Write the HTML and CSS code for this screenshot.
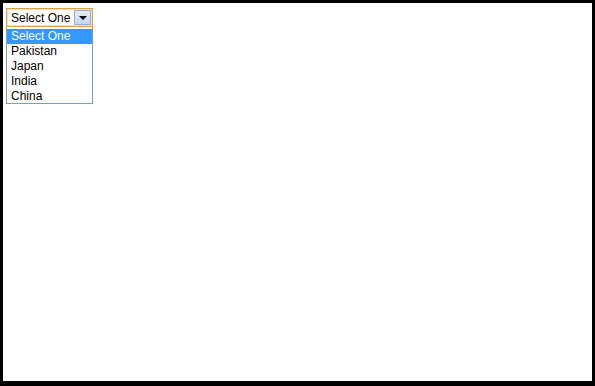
FILE: index.html
```html
<!DOCTYPE html>
<html>
<head>
<meta charset="utf-8">
<link rel="stylesheet" href="styles.css">
</head>
<body>
<div class="frame">
  <div class="combo">
    <div class="field">
      <span class="value">Select One</span>
      <span class="btn"><span class="tri"></span></span>
    </div>
    <ul class="list">
      <li class="item selected">Select One</li>
      <li class="item">Pakistan</li>
      <li class="item">Japan</li>
      <li class="item">India</li>
      <li class="item">China</li>
    </ul>
  </div>
</div>
</body>
</html>
```

FILE: styles.css
```css
html, body {
  margin: 0;
  padding: 0;
  background: #000;
}
.frame {
  box-sizing: border-box;
  width: 595px;
  height: 386px;
  border-style: solid;
  border-color: #000;
  border-width: 3px 3px 5px 3px;
  background: #fff;
  padding: 5px 0 0 3px;
  font-family: "Liberation Sans", Arial, sans-serif;
  font-size: 12px;
  color: #000;
}
.combo {
  width: 87px;
}
.field {
  box-sizing: border-box;
  height: 19px;
  border: 1px solid #dca446;
  box-shadow: inset 0 0 0 1px #f6dfb4;
  display: flex;
  align-items: center;
  justify-content: space-between;
  padding: 1px 1px 0 4px;
  background: #fff;
}
.value {
  line-height: 16px;
  color: #000;
}
.btn {
  box-sizing: border-box;
  width: 17px;
  height: 15px;
  margin-top: -1px;
  border: 1px solid #8fb0e0;
  background: linear-gradient(#e4edfb, #c4d6f3);
  display: flex;
  align-items: center;
  justify-content: center;
}
.tri {
  width: 0;
  height: 0;
  border-left: 4px solid transparent;
  border-right: 4px solid transparent;
  border-top: 4px solid #000;
  margin-top: 1px;
}
.list {
  box-sizing: border-box;
  list-style: none;
  margin: 0;
  padding: 2px 0 0 0;
  height: 77px;
  border: 1px solid #7f9db9;
  border-top: none;
  background: #fff;
}
.item {
  height: 15px;
  line-height: 15px;
  padding-left: 4px;
  color: #000;
}
.item.selected {
  background: #3399ff;
  color: #fff;
}
```
